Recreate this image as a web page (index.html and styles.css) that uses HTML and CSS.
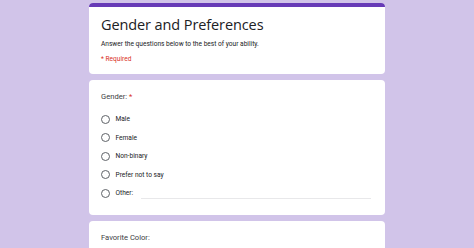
FILE: index.html
```html
<!DOCTYPE html>
<html>
<head>
<meta charset="utf-8">
<link rel="stylesheet" href="styles.css">
</head>
<body>
<main class="form">
  <section class="card header-card">
    <div class="accent"></div>
    <div class="header-body">
      <h1 class="title">Gender and Preferences</h1>
      <p class="desc">Answer the questions below to the best of your ability.</p>
      <p class="required-note">* Required</p>
    </div>
  </section>
  <section class="card question">
    <div class="q-label">Gender: <span class="star">*</span></div>
    <div class="options">
      <label class="option"><span class="radio"></span><span class="opt-text">Male</span></label>
      <label class="option"><span class="radio"></span><span class="opt-text">Female</span></label>
      <label class="option"><span class="radio"></span><span class="opt-text">Non-binary</span></label>
      <label class="option"><span class="radio"></span><span class="opt-text">Prefer not to say</span></label>
      <label class="option"><span class="radio"></span><span class="opt-text">Other:</span><span class="other-line"></span></label>
    </div>
  </section>
  <section class="card question">
    <div class="q-label">Favorite Color:</div>
  </section>
</main>
</body>
</html>
```
FILE: styles.css
```css
html, body {
  margin: 0;
  padding: 0;
  background: #d1c4e9;
  height: 100%;
  overflow: hidden;
}
body {
  font-family: Roboto, "Liberation Sans", sans-serif;
  color: #202124;
}
.form {
  width: 296px;
  margin: 0 auto;
  padding-top: 3px;
  display: flex;
  flex-direction: column;
  gap: 6px;
}
.card {
  background: #fff;
  border-radius: 4px;
  overflow: hidden;
}
.accent {
  height: 4px;
  background: #673ab7;
}
.header-body {
  padding: 8px 12px 10px 12px;
}
.title {
  margin: 0;
  font-family: "Open Sans", Roboto, sans-serif;
  font-weight: 400;
  font-size: 14.5px;
  line-height: 20px;
  color: #202124;
  letter-spacing: -0.1px;
}
.desc {
  margin: 4px 0 0 0;
  font-size: 6.6px;
  line-height: 10px;
  color: #202124;
}
.required-note {
  margin: 5px 0 0 0;
  font-size: 6.6px;
  line-height: 10px;
  color: #d93025;
}
.question {
  padding: 12px 12px 17px 12px;
}
.q-label {
  font-size: 7.6px;
  line-height: 10px;
  color: #3c4043;
}
.star {
  color: #d93025;
}
.options {
  margin-top: 12px;
  display: flex;
  flex-direction: column;
  gap: 8.5px;
}
.option {
  display: flex;
  align-items: center;
  height: 10px;
  font-size: 6.6px;
  color: #202124;
}
.radio {
  width: 7px;
  height: 7px;
  border: 1.3px solid #5f6368;
  border-radius: 50%;
  flex: none;
  margin-right: 5.5px;
}
.other-line {
  flex: 1;
  align-self: flex-end;
  height: 0;
  border-bottom: 1px solid #e8e8ea;
  margin-left: 8px;
  margin-right: 2px;
  margin-bottom: -1px;
}
```
